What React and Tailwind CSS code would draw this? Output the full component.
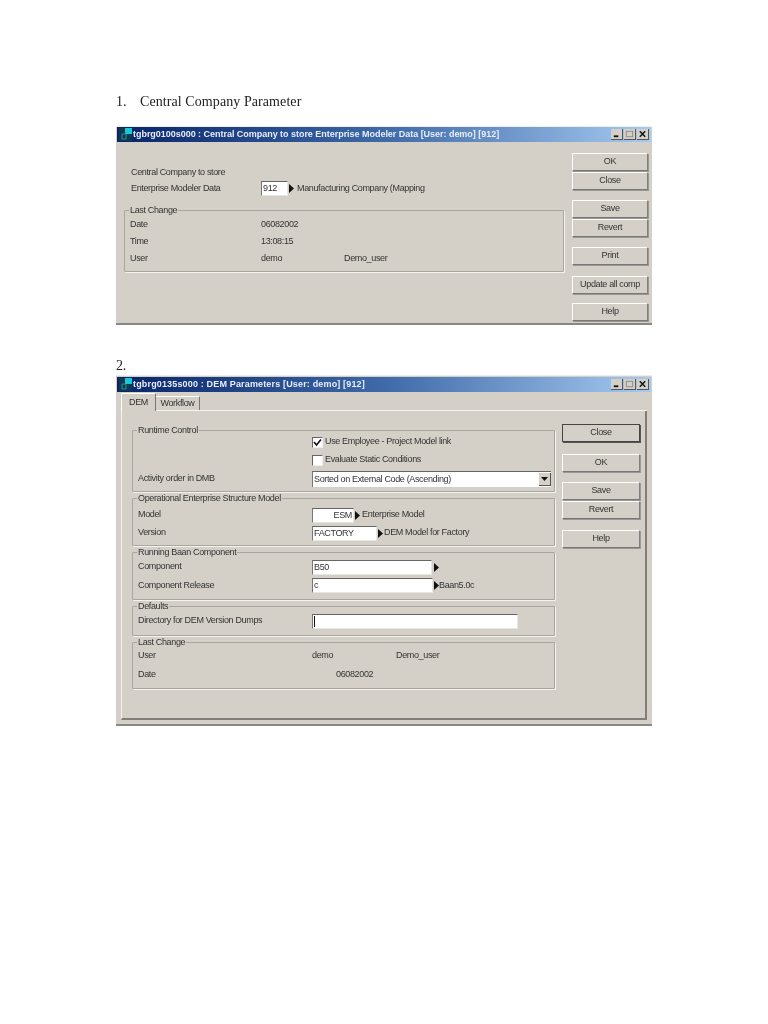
const ui = { fontFamily: '"Liberation Sans", Arial, sans-serif' };
const serif = { fontFamily: '"Liberation Serif", "Times New Roman", serif' };

const Arrow = () => (
  <svg width="5" height="9" viewBox="0 0 5 9" className="shrink-0">
    <path d="M0 0 L5 4.5 L0 9 Z" fill="#111" />
  </svg>
);

const WinBtn = ({ children }) => (
  <svg width="12" height="11" viewBox="0 0 12 11" className="bg-[#d4d0c8] border-r border-b border-[#555]">
    {children}
  </svg>
);

const TitleBar = ({ title, tracking }) => (
  <div className="flex items-center h-[15px] mx-[1px] pl-[2px] pr-[2px] bg-gradient-to-r from-[#0a246a] via-[#3f6aa8] to-[#a6caf0]">
    <svg width="13" height="13" viewBox="0 0 13 13" className="shrink-0">
      <rect width="13" height="13" fill="#0b3b52" />
      <rect x="6" width="7" height="6" fill="#19c8d8" />
      <path d="M3 6h4v5H3z" fill="none" stroke="#2f8f88" strokeWidth="1" />
    </svg>
    <span className={`${tracking} ml-[1px] text-[9px] font-bold text-[#e8eef8] whitespace-nowrap`}>{title}</span>
    <div className="ml-auto flex gap-[1px]">
      <WinBtn><rect x="3" y="7" width="5" height="2" fill="#111" /></WinBtn>
      <WinBtn><rect x="2.5" y="2.5" width="7" height="6" fill="none" stroke="#8a8a86" /></WinBtn>
      <WinBtn><path d="M3 2.5l6 6M9 2.5l-6 6" stroke="#111" strokeWidth="1.6" /></WinBtn>
    </div>
  </div>
);

const Btn = ({ children, w = 'w-[76px]', cls = '', isDefault }) => (
  <div
    className={`${w} ${cls} h-[18px] flex items-center justify-center text-[9px] text-[#333] bg-[#d4d0c8] ${
      isDefault
        ? 'border border-[#444] shadow-[1px_1px_0_#555]'
        : 'border-t border-l border-t-white border-l-white border-r border-b border-r-[#808080] border-b-[#777] shadow-[1px_1px_0_#9a9892]'
    }`}
  >
    {children}
  </div>
);

const Field = ({ w, children, right }) => (
  <div className={`${w} h-[15px] shrink-0 flex items-center px-[1px] pt-[1px] text-[9px] text-[#333] bg-white border-t border-l border-t-[#666] border-l-[#777] border-b border-r border-b-[#e8e6e0] border-r-[#e8e6e0] ${right ? 'justify-end' : ''}`}>
    {children}
  </div>
);

const Group = ({ title, h, cls = '', children }) => (
  <fieldset className={`${h} ${cls} block min-w-0 border border-[#a9a6a0] rounded-[1px] shadow-[1px_1px_0_#f4f3ef] px-[5px]`}>
    <legend className="-ml-[1px] px-[1px] text-[9px] leading-[10px] text-[#333]">{title}</legend>
    {children}
  </fieldset>
);

const Row = ({ label, labelW, h = 'h-[17px]', cls = '', children }) => (
  <div className={`${h} ${cls} flex items-center text-[9px] text-[#333] whitespace-nowrap`}>
    <div className={`${labelW} shrink-0`}>{label}</div>
    {children}
  </div>
);

const Check = ({ checked }) => (
  <div className="w-[11px] h-[11px] bg-white border-t border-l border-t-[#666] border-l-[#666] border-b border-r border-b-[#eee] border-r-[#eee]">
    {checked && (
      <svg width="9" height="9" viewBox="0 0 9 9">
        <path d="M1 4l2.5 3L8 1.5" fill="none" stroke="#111" strokeWidth="1.6" />
      </svg>
    )}
  </div>
);

const CentralCompany = () => (
  <div className="w-[536px] h-[199px] flex flex-col bg-[#d4d0c8] border-t border-t-[#eeeeea] border-b-2 border-b-[#8a8884]">
    <TitleBar title="tgbrg0100s000 : Central Company to store Enterprise Modeler Data [User: demo] [912]" tracking="tracking-[-0.03px]" />
    <div className="flex flex-1">
      <div className="w-[456px] pl-[8px] pt-[24px]">
        <div className="pl-[7px]">
          <Row label="Central Company to store" labelW="w-[130px]" h="h-[14px]" />
          <Row label="Enterprise Modeler Data" labelW="w-[130px]">
            <Field w="w-[27px]">912</Field>
            <span className="ml-[1px]"><Arrow /></span>
            <span className="ml-[3px]">Manufacturing Company (Mapping</span>
          </Row>
        </div>
        <Group title="Last Change" h="h-[67px]" cls="mt-[8px] w-[440px]">
          <Row label="Date" labelW="w-[131px]" cls="mt-[1px]"><span>06082002</span></Row>
          <Row label="Time" labelW="w-[131px]"><span>13:08:15</span></Row>
          <Row label="User" labelW="w-[131px]">
            <span className="w-[83px]">demo</span>
            <span>Demo_user</span>
          </Row>
        </Group>
      </div>
      <div className="pt-[11px] flex flex-col">
        <Btn>OK</Btn>
        <Btn cls="mt-[1px]">Close</Btn>
        <Btn cls="mt-[10px]">Save</Btn>
        <Btn cls="mt-[1px]">Revert</Btn>
        <Btn cls="mt-[10px]">Print</Btn>
        <Btn cls="mt-[11px]">Update all comp</Btn>
        <Btn cls="mt-[9px]">Help</Btn>
      </div>
    </div>
  </div>
);

const Tabs = () => (
  <div className="flex items-end h-[19px] mx-[5px] border-b border-b-[#f4f3ef] relative z-10">
    <div className="w-[35px] h-[18px] -mb-[1px] flex items-center justify-center text-[9px] text-[#333] bg-[#d4d0c8] border-t border-l border-t-white border-l-white border-r border-r-[#777]">DEM</div>
    <div className="w-[44px] h-[14px] flex items-center justify-center text-[9px] text-[#333] border-t border-t-white border-r border-r-[#777]">Workflow</div>
  </div>
);

const DemParameters = () => (
  <div className="w-[536px] h-[351px] flex flex-col bg-[#d4d0c8] border-t border-t-[#eeeeea] border-b-2 border-b-[#8a8884] pt-[1px]">
    <TitleBar title="tgbrg0135s000 : DEM Parameters [User: demo] [912]" tracking="tracking-[0.16px]" />
    <Tabs />
    <div className="h-[309px] mx-[5px] flex border-l border-l-[#f4f3ef] border-r-2 border-r-[#807e7a] border-b-2 border-b-[#807e7a]">
      <div className="w-[423px] ml-[10px] pt-[14px] flex flex-col">
        <Group title="Runtime Control" h="h-[67px]">
          <div className="pl-[174px] -mt-[2px] h-[18px] flex items-center gap-[2px] text-[9px] text-[#333] whitespace-nowrap">
            <Check checked />
            Use Employee - Project Model link
          </div>
          <div className="pl-[174px] h-[18px] flex items-center gap-[2px] text-[9px] text-[#333] whitespace-nowrap">
            <Check />
            Evaluate Static Conditions
          </div>
          <Row label="Activity order in DMB" labelW="w-[174px]" h="h-[20px]">
            <div className="w-[239px] h-[16px] shrink-0 flex items-center pl-[1px] bg-white border-t border-l border-t-[#666] border-l-[#777]">
              Sorted on External Code (Ascending)
              <div className="ml-auto w-[12px] h-[13px] flex items-center justify-center bg-[#d4d0c8] border-r border-b border-[#555]">
                <svg width="7" height="4" viewBox="0 0 7 4"><path d="M0 0h7L3.5 4z" fill="#111" /></svg>
              </div>
            </div>
          </Row>
        </Group>
        <Group title="Operational Enterprise Structure Model" h="h-[53px]" cls="mt-[1px]">
          <Row label="Model" labelW="w-[174px]" h="h-[18px]" cls="mt-[3px]">
            <Field w="w-[42px]" right>ESM</Field>
            <span className="ml-[1px]"><Arrow /></span>
            <span className="ml-[2px]">Enterprise Model</span>
          </Row>
          <Row label="Version" labelW="w-[174px]" h="h-[18px]">
            <Field w="w-[65px]">FACTORY</Field>
            <span className="ml-[1px]"><Arrow /></span>
            <span className="ml-[1px]">DEM Model for Factory</span>
          </Row>
        </Group>
        <Group title="Running Baan Component" h="h-[53px]" cls="mt-[1px]">
          <Row label="Component" labelW="w-[174px]" h="h-[18px]" cls="mt-[1px]">
            <Field w="w-[120px]">B50</Field>
            <span className="ml-[2px]"><Arrow /></span>
          </Row>
          <Row label="Component Release" labelW="w-[174px]" h="h-[19px]">
            <Field w="w-[121px]">c</Field>
            <span className="ml-[1px]"><Arrow /></span>
            <span>Baan5.0c</span>
          </Row>
        </Group>
        <Group title="Defaults" h="h-[35px]" cls="mt-[1px]">
          <Row label="Directory for DEM Version Dumps" labelW="w-[174px]" h="h-[18px]" cls="mt-[1px]">
            <Field w="w-[206px]"><span className="w-[1px] h-[11px] bg-[#111]" /></Field>
          </Row>
        </Group>
        <Group title="Last Change" h="h-[52px]" cls="mt-[1px]">
          <Row label="User" labelW="w-[174px]" h="h-[18px]">
            <span className="w-[84px]">demo</span>
            <span>Demo_user</span>
          </Row>
          <Row label="Date" labelW="w-[198px]" h="h-[19px]">
            <span>06082002</span>
          </Row>
        </Group>
      </div>
      <div className="ml-[7px] pt-[13px] flex flex-col">
        <Btn w="w-[78px]" isDefault>Close</Btn>
        <Btn w="w-[78px]" cls="mt-[12px]">OK</Btn>
        <Btn w="w-[78px]" cls="mt-[10px]">Save</Btn>
        <Btn w="w-[78px]" cls="mt-[1px]">Revert</Btn>
        <Btn w="w-[78px]" cls="mt-[11px]">Help</Btn>
      </div>
    </div>
  </div>
);

export default function App() {
  return (
    <div className="w-[768px] h-[1024px] bg-white pl-[116px] pt-[93px] tracking-[-0.35px] blur-[0.35px]" style={ui}>
      <h1 className="flex h-[17px] text-[14px] leading-[17px] tracking-[0.08px] text-[#222] font-normal" style={serif}>
        <span className="w-[24px]">1.</span>
        <span>Central Company Parameter</span>
      </h1>
      <div className="mt-[16px]">
        <CentralCompany />
      </div>
      <p className="mt-[32px] h-[17px] text-[14px] leading-[17px] text-[#222]" style={serif}>2.</p>
      <div className="mt-[1px]">
        <DemParameters />
      </div>
    </div>
  );
}
